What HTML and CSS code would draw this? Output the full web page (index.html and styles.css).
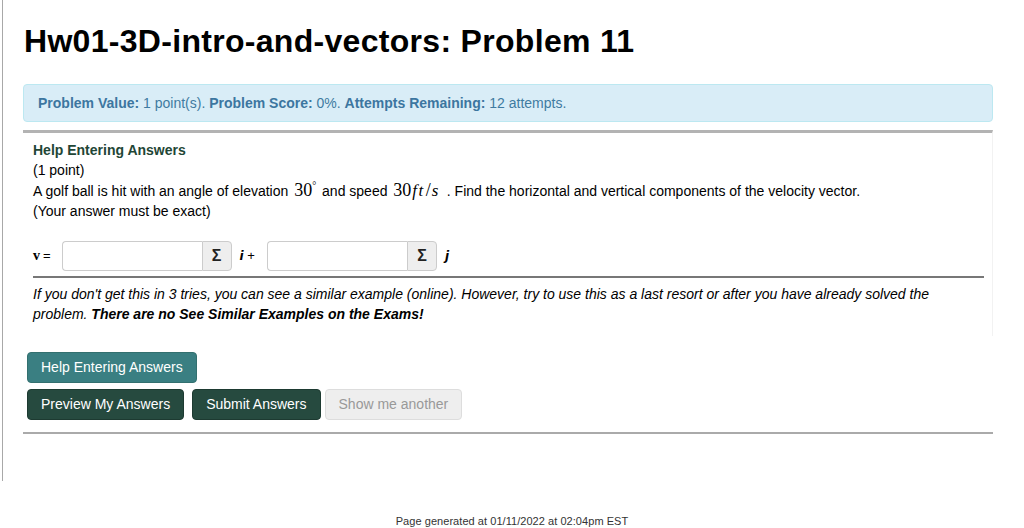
FILE: index.html
```html
<!DOCTYPE html>
<html>
<head>
<meta charset="utf-8">
<link rel="stylesheet" href="styles.css">
</head>
<body>
<div class="shell">
  <div class="main">
    <h1 class="title">Hw01-3D-intro-and-vectors: Problem 11</h1>
    <div class="alert">
      <b>Problem Value:</b> 1 point(s). <b>Problem Score:</b> 0%. <b>Attempts Remaining:</b> 12 attempts.
    </div>
    <div class="problem">
      <div class="help-title">Help Entering Answers</div>
      <div class="line">(1 point)</div>
      <div class="line">A golf ball is hit with an angle of elevation <span class="math">30<sup class="deg">&deg;</sup></span> and speed <span class="math">30<i class="unit-math">ft</i>/<i>s</i></span> . Find the horizontal and vertical components of the velocity vector.</div>
      <div class="line">(Your answer must be exact)</div>
      <div class="answer-row">
        <span class="vlabel">v</span><span class="eq">=</span>
        <span class="field"><span class="input"></span><span class="sigma">&Sigma;</span></span>
        <span class="unit"><i>i</i> +</span>
        <span class="field"><span class="input"></span><span class="sigma">&Sigma;</span></span>
        <span class="unit"><i>j</i></span>
      </div>
      <div class="note">If you don't get this in 3 tries, you can see a similar example (online). However, try to use this as a last resort or after you have already solved the problem. <b>There are no See Similar Examples on the Exams!</b></div>
    </div>
    <div class="buttons">
      <div class="btn-row"><span class="btn btn-help">Help Entering Answers</span></div>
      <div class="btn-row">
        <span class="btn btn-dark">Preview My Answers</span>
        <span class="btn btn-dark">Submit Answers</span>
        <span class="btn btn-disabled">Show me another</span>
      </div>
    </div>
    <div class="rule"></div>
  </div>
</div>
<div class="footer">Page generated at 01/11/2022 at 02:04pm EST</div>
</body>
</html>
```
FILE: styles.css
```css
html, body {
  margin: 0;
  padding: 0;
  background: #fff;
  font-family: "Liberation Sans", Arial, sans-serif;
  color: #000;
}
.shell {
  margin-left: 2px;
  border-left: 1px solid #a8a8a8;
  height: 481px;
  padding-left: 20px;
}
.main {
  width: 970px;
  padding-top: 1px;
}
.title {
  font-size: 32px;
  font-weight: bold;
  line-height: 38px;
  margin: 21px 0 24px 1px;
  letter-spacing: 0.3px;
}
.alert {
  background: #d9edf7;
  border: 1px solid #bce8f1;
  border-radius: 4px;
  color: #3f7ba1;
  font-size: 14px;
  line-height: 18px;
  padding: 9px 14px;
}
.alert b {
  color: #3c76a0;
}
.problem {
  margin-top: 8px;
  border-top: 3px solid #b3b3b3;
  border-right: 1px solid #f2f2f2;
  padding: 7px 8px 12px 10px;
  font-size: 14px;
  line-height: 20px;
}
.help-title {
  color: #1f4636;
  font-weight: bold;
}
.math {
  font-family: "Liberation Serif", "Times New Roman", serif;
  font-size: 18px;
  margin: 0 2px;
}
.math i {
  font-size: 17px;
  letter-spacing: 1.5px;
  margin: 0 1px;
}
.deg {
  font-size: 10px;
  vertical-align: 7px;
  line-height: 0;
}
.answer-row {
  display: flex;
  align-items: center;
  margin-top: 20px;
  height: 30px;
  padding-bottom: 5px;
  border-bottom: 2px solid #777;
}
.vlabel {
  font-family: "Liberation Serif", serif;
  font-weight: bold;
  font-size: 14px;
  margin-right: 3px;
}
.eq {
  font-size: 13px;
  margin-right: 11px;
}
.field {
  display: flex;
  height: 30px;
}
.input {
  width: 139px;
  height: 28px;
  border: 1px solid #ccc;
  border-right: none;
  border-radius: 4px 0 0 4px;
  background: #fff;
}
.sigma {
  width: 28px;
  height: 28px;
  border: 1px solid #ccc;
  border-radius: 0 4px 4px 0;
  background: #eeeeee;
  display: flex;
  align-items: center;
  justify-content: center;
  font-weight: bold;
  font-size: 16px;
  color: #222;
}
.unit {
  font-size: 13px;
  margin: 0 12px 0 8px;
}
.unit i {
  font-family: "DejaVu Sans", sans-serif;
  font-weight: bold;
  font-size: 12px;
}
.note {
  font-style: italic;
  margin-top: 6px;
  line-height: 20px;
}
.buttons {
  margin-top: 16px;
  padding-left: 4px;
}
.btn-row {
  display: flex;
  gap: 8px;
  margin-bottom: 6px;
}
.btn {
  display: inline-block;
  font-size: 14px;
  line-height: 20px;
  padding: 4px 13px 5px;
  border-radius: 4px;
  border: 1px solid transparent;
}
.btn-help {
  background: #3a7f82;
  border-color: #33706f;
  color: #fff;
}
.btn-dark {
  background: #264a3f;
  border-color: #1d3a31;
  color: #fff;
}
.btn-disabled {
  background: #eeeeee;
  border-color: #dddddd;
  color: #999;
}
.buttons .btn-row:last-child .btn-disabled {
  margin-left: -4px;
}
.rule {
  margin-top: 12px;
  border-top: 2px solid #aaa;
}
.footer {
  text-align: center;
  font-size: 11px;
  color: #333;
  margin-top: 34px;
  letter-spacing: 0.05px;
}
```
